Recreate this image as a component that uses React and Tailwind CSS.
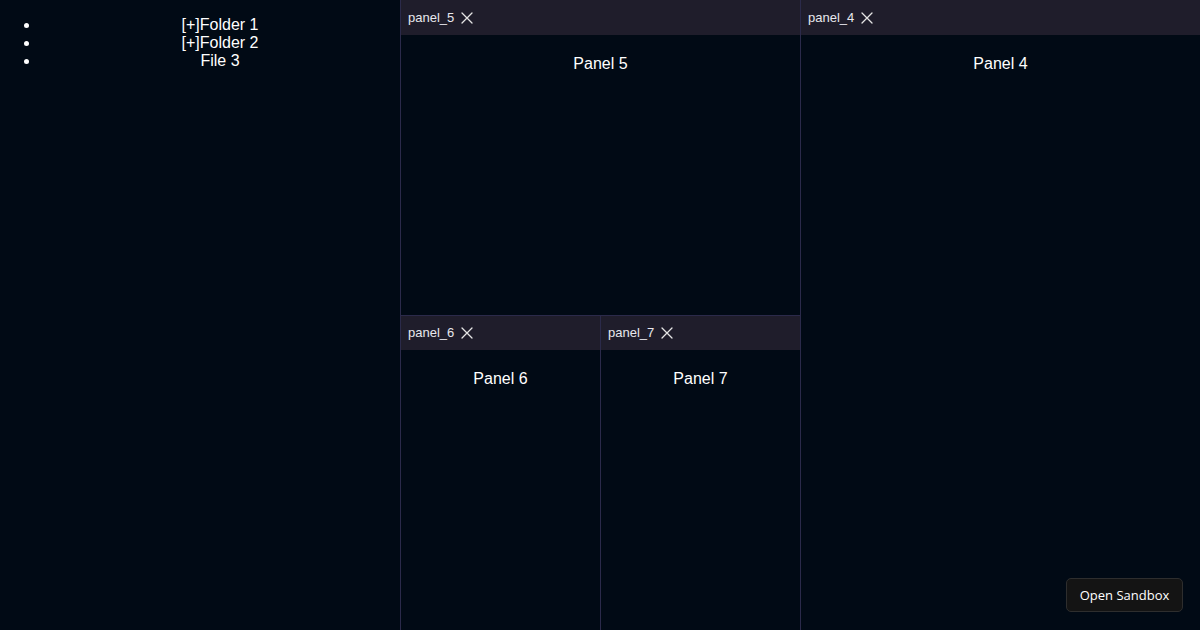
import React from "react";

function CloseIcon() {
  return (
    <svg width="12" height="12" viewBox="0 0 12 12" className="shrink-0">
      <path d="M1 1L11 11M11 1L1 11" stroke="#e5e5e5" strokeWidth="1.3" strokeLinecap="round" />
    </svg>
  );
}

function Panel({ id, title, className = "", headerH = "h-[35px]" }) {
  return (
    <div className={"flex flex-col min-w-0 min-h-0 " + className}>
      <div className={headerH + " shrink-0 bg-[#1f1d2b] flex items-center pl-[7px] gap-[7px]"}>
        <span className="text-[13px] text-[#e8e8ee] font-['Liberation_Sans',Arial,sans-serif]">{id}</span>
        <CloseIcon />
      </div>
      <div className="flex-1 px-4 pt-[17px] pb-4 text-center text-base text-white font-['Liberation_Sans',Arial,sans-serif]">
        {title}
      </div>
    </div>
  );
}

export default function App() {
  return (
    <div className="w-[1200px] h-[630px] bg-[#010a15] flex overflow-hidden relative">
      <div className="w-[400px] shrink-0 text-white font-['Liberation_Sans',Arial,sans-serif] text-base">
        <ul className="list-disc pl-10 mt-4 text-center leading-[18px]">
          <li>[+]Folder 1</li>
          <li>[+]Folder 2</li>
          <li>File 3</li>
        </ul>
      </div>
      <div className="w-[400px] shrink-0 flex flex-col border-l border-[#2b2a4a]">
        <Panel id="panel_5" title="Panel 5" className="h-[315px] shrink-0" />
        <div className="flex-1 flex border-t border-[#2b2a4a]">
          <Panel id="panel_6" title="Panel 6" className="w-[199px] shrink-0" headerH="h-[34px]" />
          <Panel id="panel_7" title="Panel 7" className="flex-1 border-l border-[#2b2a4a]" headerH="h-[34px]" />
        </div>
      </div>
      <div className="flex-1 flex border-l border-[#2b2a4a]">
        <Panel id="panel_4" title="Panel 4" className="flex-1" />
      </div>
      <button className="absolute right-[17px] bottom-[18px] h-[34px] w-[117px] pt-px rounded-[5px] bg-[#141414] border border-[#2e2e2e] text-[13px] text-white font-['Open_Sans',sans-serif] font-medium">
        Open Sandbox
      </button>
    </div>
  );
}
